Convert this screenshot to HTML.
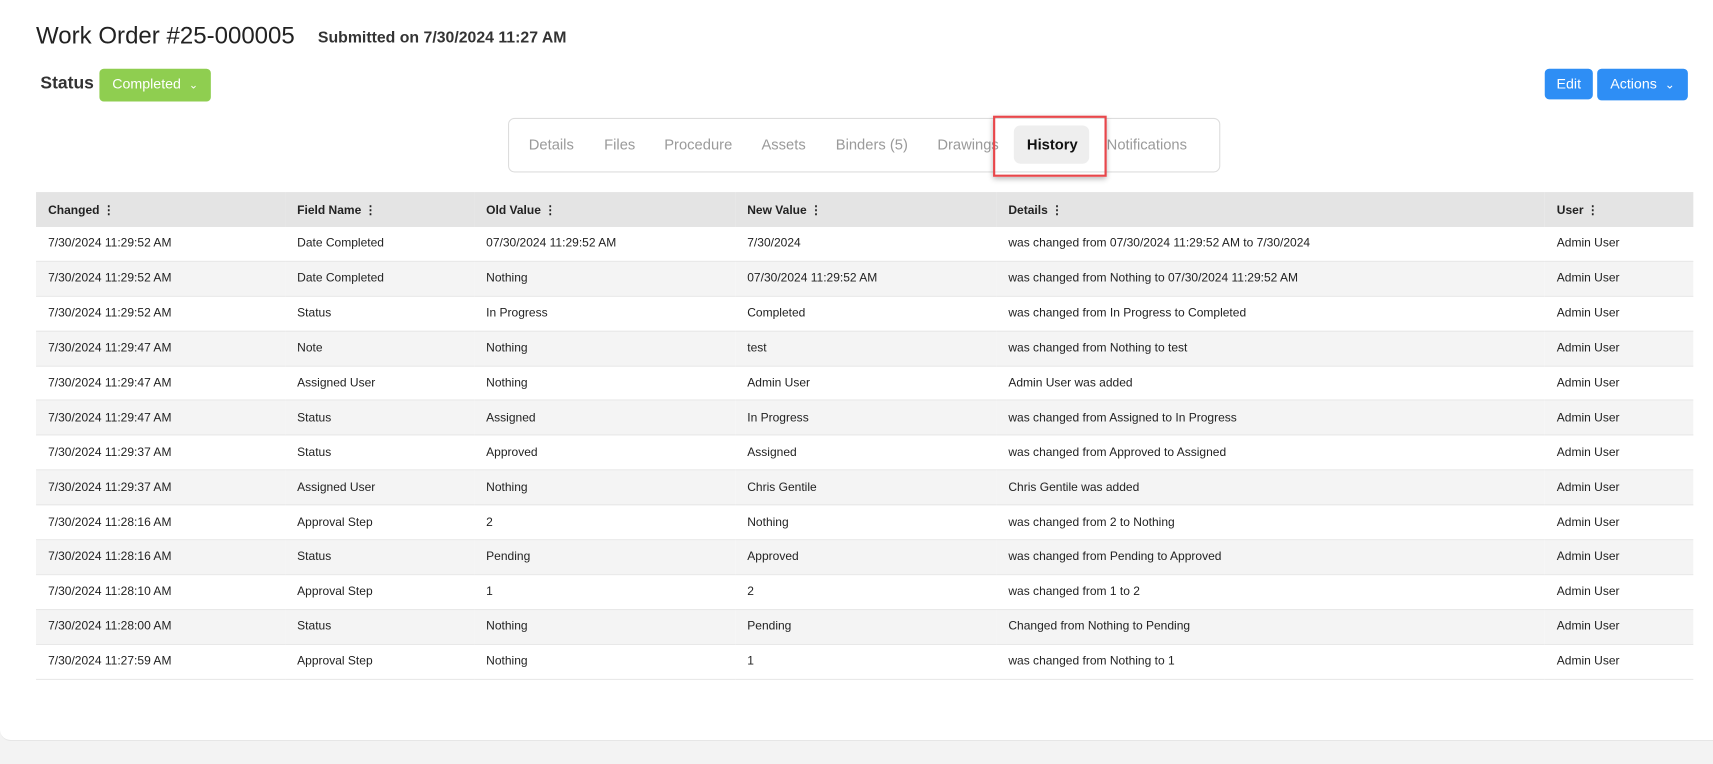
<!DOCTYPE html>
<html><head><meta charset="utf-8"><style>
html,body{margin:0;padding:0;width:1713px;height:764px;overflow:hidden;background:#f3f3f3;font-family:"Liberation Sans",Arial,sans-serif;}
#s{position:absolute;left:0;top:0;width:1568px;height:700px;transform:scale(1.09247,1.0914);transform-origin:0 0;}
.card{position:absolute;left:0;top:0;width:1568px;height:678px;background:#fff;border-radius:0 0 0 10px;border-bottom:1px solid #e6e6e6;}
.a{position:absolute;white-space:nowrap;}
.btn{position:absolute;color:#fff;border-radius:4px;font-size:13px;text-align:center;line-height:28px;}
.tab{position:absolute;top:125px;font-size:13.5px;color:#9a9a9a;}
table{position:absolute;left:33px;top:176px;width:1517px;border-collapse:collapse;font-size:11px;color:#222;}
th{background:#e4e4e4;height:32px;text-align:left;font-weight:bold;padding:0 0 0 11px;font-size:11px;}
td{height:30.9px;padding:0 0 0 11px;border-bottom:1px solid #e8e8e8;}
tr:nth-child(odd) td{background:#f4f4f4;}
.d{font-weight:bold;letter-spacing:0;margin-left:3px;}
</style></head><body><div id="s">
<div class="card"></div>
<div class="a" style="left:33px;top:20px;font-size:22px;color:#222;">Work Order #25-000005</div>
<div class="a" style="left:291px;top:27px;font-size:14.5px;font-weight:bold;color:#333;">Submitted on 7/30/2024 11:27 AM</div>
<div class="a" style="left:37px;top:68px;font-size:16px;font-weight:bold;color:#333;">Status</div>
<div class="btn" style="left:91px;top:63px;width:102px;background:#8fce50;">Completed&nbsp;&nbsp;<span style="font-size:10px">&#8964;</span></div>
<div class="btn" style="left:1414px;top:63px;width:44px;background:#2e8ef5;">Edit</div>
<div class="btn" style="left:1462px;top:63px;width:83px;background:#2e8ef5;">Actions&nbsp;&nbsp;<span style="font-size:11px">&#8964;</span></div>
<div class="a" style="left:465px;top:108px;width:650px;height:48px;border:1px solid #ddd;border-radius:6px;"></div>
<div class="a" style="left:928px;top:115px;width:69px;height:35px;background:#eee;border-radius:6px;"></div>
<div class="tab" style="left:484px">Details</div>
<div class="tab" style="left:553px">Files</div>
<div class="tab" style="left:608px">Procedure</div>
<div class="tab" style="left:697px">Assets</div>
<div class="tab" style="left:765px">Binders (5)</div>
<div class="tab" style="left:858px">Drawings</div>
<div class="tab" style="left:940px;color:#111;font-weight:bold">History</div>
<div class="tab" style="left:1013px">Notifications</div>
<div class="a" style="left:909px;top:106px;width:100px;height:52px;border:2px solid #e8474b;box-shadow:0 2px 5px rgba(0,0,0,.3);"></div>
<table>
<colgroup><col style="width:228px"><col style="width:173px"><col style="width:239px"><col style="width:239px"><col style="width:502px"><col></colgroup>
<tr><th>Changed<span class="d">&#8942;</span></th><th>Field Name<span class="d">&#8942;</span></th><th>Old Value<span class="d">&#8942;</span></th><th>New Value<span class="d">&#8942;</span></th><th>Details<span class="d">&#8942;</span></th><th>User<span class="d">&#8942;</span></th></tr>
<tr><td>7/30/2024 11:29:52 AM</td><td>Date Completed</td><td>07/30/2024 11:29:52 AM</td><td>7/30/2024</td><td>was changed from 07/30/2024 11:29:52 AM to 7/30/2024</td><td>Admin User</td></tr>
<tr><td>7/30/2024 11:29:52 AM</td><td>Date Completed</td><td>Nothing</td><td>07/30/2024 11:29:52 AM</td><td>was changed from Nothing to 07/30/2024 11:29:52 AM</td><td>Admin User</td></tr>
<tr><td>7/30/2024 11:29:52 AM</td><td>Status</td><td>In Progress</td><td>Completed</td><td>was changed from In Progress to Completed</td><td>Admin User</td></tr>
<tr><td>7/30/2024 11:29:47 AM</td><td>Note</td><td>Nothing</td><td>test</td><td>was changed from Nothing to test</td><td>Admin User</td></tr>
<tr><td>7/30/2024 11:29:47 AM</td><td>Assigned User</td><td>Nothing</td><td>Admin User</td><td>Admin User was added</td><td>Admin User</td></tr>
<tr><td>7/30/2024 11:29:47 AM</td><td>Status</td><td>Assigned</td><td>In Progress</td><td>was changed from Assigned to In Progress</td><td>Admin User</td></tr>
<tr><td>7/30/2024 11:29:37 AM</td><td>Status</td><td>Approved</td><td>Assigned</td><td>was changed from Approved to Assigned</td><td>Admin User</td></tr>
<tr><td>7/30/2024 11:29:37 AM</td><td>Assigned User</td><td>Nothing</td><td>Chris Gentile</td><td>Chris Gentile was added</td><td>Admin User</td></tr>
<tr><td>7/30/2024 11:28:16 AM</td><td>Approval Step</td><td>2</td><td>Nothing</td><td>was changed from 2 to Nothing</td><td>Admin User</td></tr>
<tr><td>7/30/2024 11:28:16 AM</td><td>Status</td><td>Pending</td><td>Approved</td><td>was changed from Pending to Approved</td><td>Admin User</td></tr>
<tr><td>7/30/2024 11:28:10 AM</td><td>Approval Step</td><td>1</td><td>2</td><td>was changed from 1 to 2</td><td>Admin User</td></tr>
<tr><td>7/30/2024 11:28:00 AM</td><td>Status</td><td>Nothing</td><td>Pending</td><td>Changed from Nothing to Pending</td><td>Admin User</td></tr>
<tr><td>7/30/2024 11:27:59 AM</td><td>Approval Step</td><td>Nothing</td><td>1</td><td>was changed from Nothing to 1</td><td>Admin User</td></tr>
</table>
</div></body></html>
